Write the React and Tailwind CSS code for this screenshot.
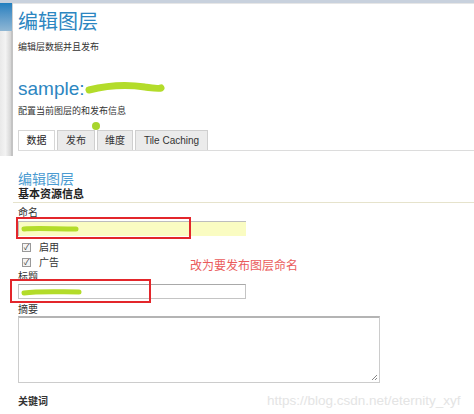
import React from 'react';

const font = { fontFamily: '"Liberation Sans", "Noto Sans CJK SC", sans-serif' };

// green marker strokes that hide names in the screenshot
function Scribble({ w, h, d, sw = 6 }) {
  return (
    <svg width={w} height={h} viewBox={`0 0 ${w} ${h}`} className="block">
      <path d={d} stroke="#b3dc2a" strokeWidth={sw} strokeLinecap="round" strokeLinejoin="round" fill="none" />
    </svg>
  );
}

function Tab({ label, active, w }) {
  return (
    <div
      className={`h-[20px] flex items-center justify-center text-[10px] border border-b-0 ${
        active ? 'bg-white border-[#d6d6d6] text-[#222]' : 'bg-[#ebebeb] border-[#cfcfcf] text-[#333]'
      } ${w}`}
    >
      {label}
    </div>
  );
}

function Check({ label }) {
  return (
    <div className="h-[15px] flex items-center gap-[8px] pl-[4px]">
      <span className="w-[9px] h-[9px] border border-[#999] bg-[#f4f4f4] flex items-center justify-center text-[8px] leading-none text-[#333]">✓</span>
      <span className="text-[10px] text-[#333]">{label}</span>
    </div>
  );
}

export default function App() {
  return (
    <div className="w-[474px] h-[414px] bg-white overflow-hidden relative" style={font}>
      <div className="h-[3px] bg-[#c8d1dd]" />
      <div className="flex">
        {/* left frame edge */}
        <div className="w-[13px] flex-shrink-0 flex flex-col">
          <div className="h-[28px] bg-gradient-to-b from-[#1f7fbf] to-[#8fb7d4] border-r border-[#d0d0d0]" />
          <div className="h-[125px] bg-gradient-to-r from-[#e9e9e9] via-[#f3f3f3] to-[#d4d4d4] border-r-2 border-[#c4c4c4]" />
        </div>

        {/* main panel */}
        <div className="flex-1 pl-[5px] border-t border-[#e6e6e6]">
          <div className="h-[26px] mt-[5px] flex items-center text-[20px] text-[#2c86c1]">编辑图层</div>
          <div className="h-[14px] mt-[6px] flex items-center text-[9px] text-[#333]">编辑层数据并且发布</div>

          <div className="h-[28px] mt-[19px] flex items-center">
            <span className="text-[19px] text-[#2c86c1] leading-none">sample:</span>
            <Scribble w={80} h={16} d="M4 10 C20 6, 40 4, 60 7 C68 8, 74 9, 76 8" sw={7} />
          </div>
          <div className="h-[14px] mt-[3px] flex items-center text-[9px] text-[#333]">配置当前图层的和发布信息</div>

          <div className="h-[12px] relative">
            <span className="absolute left-[74px] top-[3px] w-[8px] h-[8px] rounded-full bg-[#a8d52c]" />
          </div>

          {/* tabs */}
          <div className="flex items-end gap-[2px] border-b border-[#dcdcdc] h-[20px]">
            <Tab label="数据" active w="w-[37px]" />
            <Tab label="发布" w="w-[38px]" />
            <Tab label="维度" w="w-[36px]" />
            <Tab label="Tile Caching" w="w-[73px]" />
          </div>

          <div className="h-[16px] mt-[20px] flex items-center text-[14px] text-[#4b9bd1]">编辑图层</div>
          <div className="h-[14px] flex items-center text-[11px] font-bold text-[#222]">基本资源信息</div>
          <div className="h-[1px] bg-[#e6e3cc] mt-[1px] -ml-[5px]" />

          <div className="h-[12px] mt-[3px] flex items-center text-[10px] text-[#333]">命名</div>
          <div className="relative mt-[3px] w-[228px] h-[15px] bg-[#fafcc2] border-t border-l border-[#bdbdbd] flex items-center pl-[2px]">
            <Scribble w={60} h={10} d="M3 5 C15 4, 35 5, 55 5" sw={5} />
            <span className="absolute -left-[3px] -top-[5px] w-[175px] h-[22px] border-2 border-[#e3262b]" />
          </div>

          <div className="mt-[4px]">
            <Check label="启用" />
            <Check label="广告" />
          </div>

          <div className="relative h-[12px] flex items-center text-[10px] text-[#333]">
            标题
            <span className="absolute left-[172px] -top-[13px] text-[12px] text-[#ea5b5b] whitespace-nowrap">改为要发布图层命名</span>
          </div>
          <div className="relative mt-[2px] w-[228px] h-[15px] bg-white border border-[#c4c4c4] border-t-[#a9a9a9] flex items-center pl-[2px]">
            <Scribble w={62} h={10} d="M3 6 C18 4, 38 5, 58 5" sw={5} />
            <span className="absolute -left-[9px] -top-[6px] w-[141px] h-[24px] border-2 border-[#e3262b]" />
          </div>

          <div className="h-[12px] mt-[4px] flex items-center text-[10px] text-[#333]">摘要</div>
          <div className="relative mt-[1px] w-[362px] h-[67px] border border-[#cccccc] border-t-2 border-t-[#b4b4b4] bg-white">
            <svg width="7" height="7" viewBox="0 0 7 7" className="absolute right-[1px] bottom-[1px]">
              <path d="M6 1 L1 6 M6 4 L4 6" stroke="#888" strokeWidth="1" />
            </svg>
          </div>

          <div className="h-[12px] mt-[12px] flex items-center text-[10px] font-bold text-[#333]">关键词</div>
        </div>
      </div>

      <div className="absolute left-[267px] top-[391px] text-[13.5px] text-[#e4e4e4] whitespace-nowrap">https://blog.csdn.net/eternity_xyf</div>
    </div>
  );
}
